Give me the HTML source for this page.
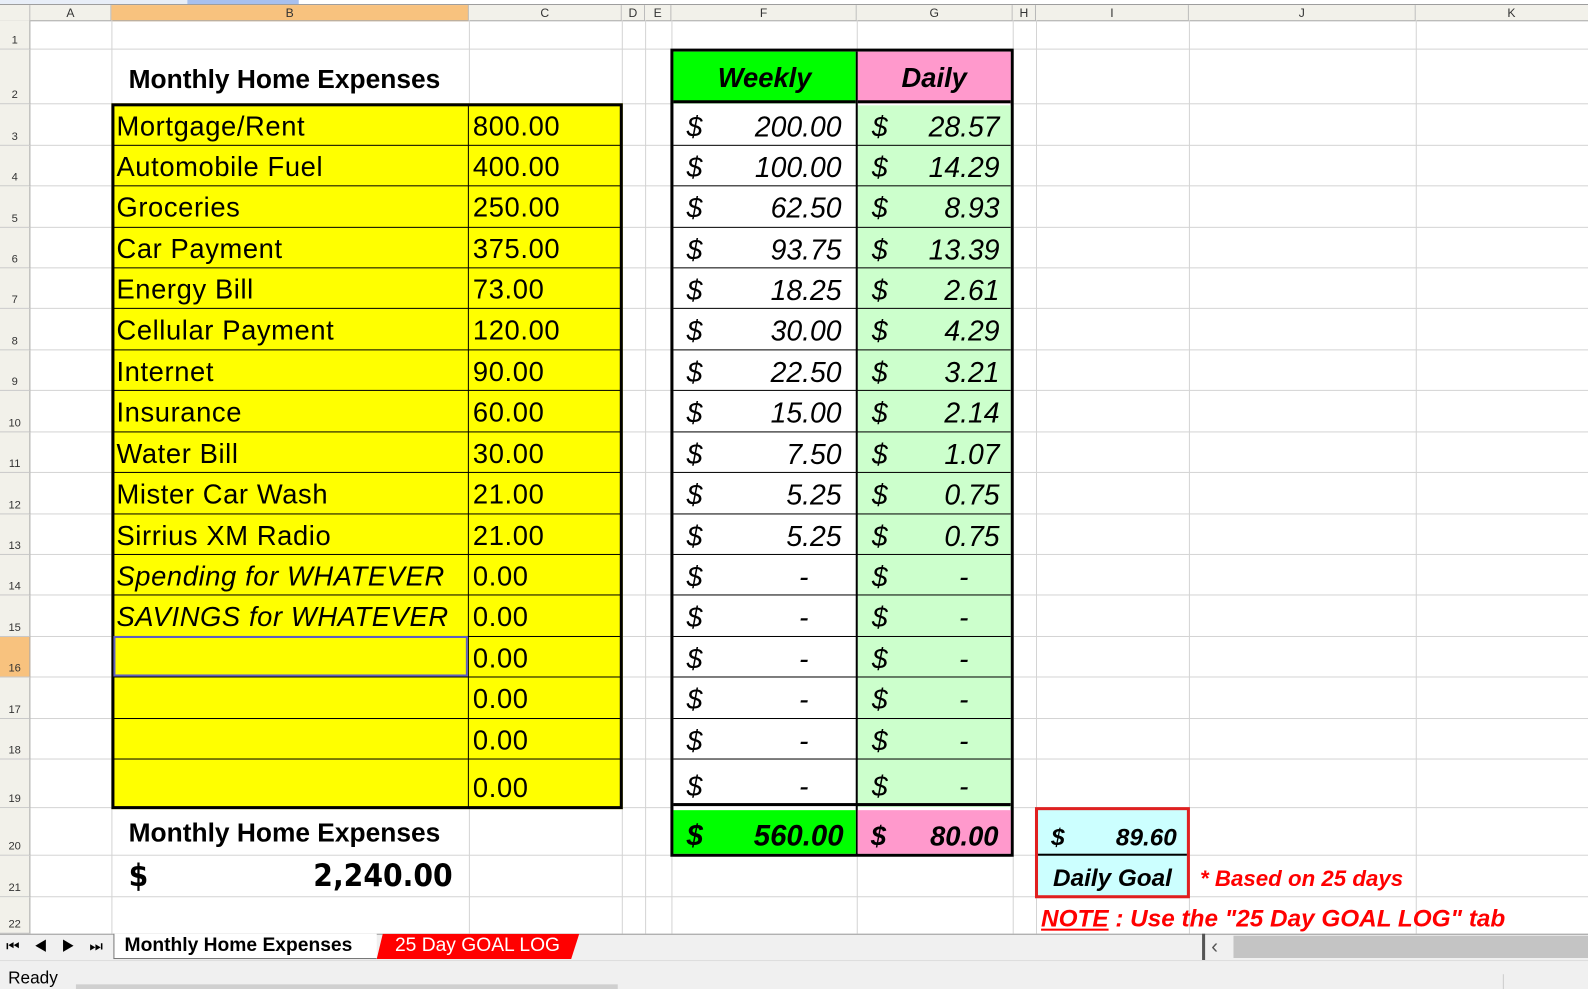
<!DOCTYPE html>
<html><head><meta charset="utf-8"><style>
*{margin:0;padding:0;box-sizing:border-box}
html,body{width:1588px;height:989px;overflow:hidden;background:#fff}
body{font-family:"Liberation Sans",sans-serif;position:relative}
#w{position:absolute;left:0;top:0;width:1570px;height:977px;transform:scale(1.0127);transform-origin:0 0}
.a{position:absolute}
.vl{position:absolute;top:20px;height:902px;width:1px;background:#d4d4d4}
.hl{position:absolute;left:0;width:1588px;height:1px;background:#d4d4d4}
.ch{position:absolute;top:5px;height:16px;font-size:12px;color:#333;text-align:center;line-height:16px;border-right:1px solid #b8b8b8;background:#f2f1ea;border-bottom:1px solid #aaa}
.rh{position:absolute;left:0;width:30px;font-size:11px;color:#333;background:#f2f1ea;border-bottom:1px solid #c8c8c8;border-right:1px solid #aaa;display:flex;align-items:flex-end;justify-content:center;padding-bottom:2px}
.yb>div{position:relative;border-bottom:1px solid #000;font-size:27px;line-height:42px;letter-spacing:0.6px}
.fg{position:absolute;left:665px;top:104px;width:333px;font-size:28px;font-style:italic}
.fg>div{position:relative;border-bottom:1px solid #000;line-height:44px}
.fg .s1{position:absolute;left:13px}
.fg .v1{position:absolute;left:60px;width:106px;text-align:right}
.fg .s2{position:absolute;left:196px}
.fg .v2{position:absolute;left:220px;width:102px;text-align:right}
.fg .d1{position:absolute;left:124px}
.fg .d2{position:absolute;left:282px}
</style></head><body><div id="w">
<div class="a" style="left:0;top:0;width:185px;height:4px;background:#e8eef8"></div>
<div class="a" style="left:185px;top:0;width:110px;height:4px;background:#a8c0ee"></div>
<div class="a" style="left:0;top:4px;width:1588px;height:1px;background:#999"></div>
<div class="ch" style="left:0;width:30px"></div>
<div class="ch" style="left:30px;width:80px">A</div>
<div class="ch" style="left:110px;width:353px;background:#f8c27e">B</div>
<div class="ch" style="left:463px;width:151px">C</div>
<div class="ch" style="left:614px;width:23px">D</div>
<div class="ch" style="left:637px;width:26px">E</div>
<div class="ch" style="left:663px;width:183px">F</div>
<div class="ch" style="left:846px;width:154px">G</div>
<div class="ch" style="left:1000px;width:23px">H</div>
<div class="ch" style="left:1023px;width:151px">I</div>
<div class="ch" style="left:1174px;width:224px">J</div>
<div class="ch" style="left:1398px;width:190px">K</div>
<div class="vl" style="left:110px"></div><div class="vl" style="left:463px"></div><div class="vl" style="left:614px"></div><div class="vl" style="left:637px"></div><div class="vl" style="left:663px"></div><div class="vl" style="left:846px"></div><div class="vl" style="left:1000px"></div><div class="vl" style="left:1023px"></div><div class="vl" style="left:1174px"></div><div class="vl" style="left:1398px"></div>
<div class="hl" style="top:48px"></div><div class="hl" style="top:102px"></div><div class="hl" style="top:143px"></div><div class="hl" style="top:183px"></div><div class="hl" style="top:224px"></div><div class="hl" style="top:264px"></div><div class="hl" style="top:304px"></div><div class="hl" style="top:345px"></div><div class="hl" style="top:385px"></div><div class="hl" style="top:426px"></div><div class="hl" style="top:466px"></div><div class="hl" style="top:507px"></div><div class="hl" style="top:547px"></div><div class="hl" style="top:587px"></div><div class="hl" style="top:628px"></div><div class="hl" style="top:668px"></div><div class="hl" style="top:709px"></div><div class="hl" style="top:749px"></div><div class="hl" style="top:797px"></div><div class="hl" style="top:844px"></div><div class="hl" style="top:885px"></div>
<div class="rh" style="top:20px;height:29px">1</div><div class="rh" style="top:49px;height:54px">2</div><div class="rh" style="top:103px;height:41px">3</div><div class="rh" style="top:144px;height:40px">4</div><div class="rh" style="top:184px;height:41px">5</div><div class="rh" style="top:225px;height:40px">6</div><div class="rh" style="top:265px;height:40px">7</div><div class="rh" style="top:305px;height:41px">8</div><div class="rh" style="top:346px;height:40px">9</div><div class="rh" style="top:386px;height:41px">10</div><div class="rh" style="top:427px;height:40px">11</div><div class="rh" style="top:467px;height:41px">12</div><div class="rh" style="top:508px;height:40px">13</div><div class="rh" style="top:548px;height:40px">14</div><div class="rh" style="top:588px;height:41px">15</div><div class="rh" style="top:629px;height:40px;background:#f8c27e">16</div><div class="rh" style="top:669px;height:41px">17</div><div class="rh" style="top:710px;height:40px">18</div><div class="rh" style="top:750px;height:48px">19</div><div class="rh" style="top:798px;height:47px">20</div><div class="rh" style="top:845px;height:41px">21</div><div class="rh" style="top:886px;height:36px">22</div>
<div class="a" style="left:127px;top:58px;font-size:26px;font-weight:bold;line-height:40px">Monthly Home Expenses</div>
<div class="a" style="left:110px;top:102px;width:505px;height:697px;background:#ff0;border:3px solid #000"></div>
<div class="a" style="left:462px;top:103px;width:1px;height:695px;background:#000"></div>
<div class="yb" style="position:absolute;left:112px;top:104px;width:501px">
<div style="height:40px"><span class="a" style="left:3px">Mortgage/Rent</span><span class="a" style="left:355px">800.00</span></div>
<div style="height:40px"><span class="a" style="left:3px">Automobile Fuel</span><span class="a" style="left:355px">400.00</span></div>
<div style="height:41px"><span class="a" style="left:3px">Groceries</span><span class="a" style="left:355px">250.00</span></div>
<div style="height:40px"><span class="a" style="left:3px">Car Payment</span><span class="a" style="left:355px">375.00</span></div>
<div style="height:40px"><span class="a" style="left:3px">Energy Bill</span><span class="a" style="left:355px">73.00</span></div>
<div style="height:41px"><span class="a" style="left:3px">Cellular Payment</span><span class="a" style="left:355px">120.00</span></div>
<div style="height:40px"><span class="a" style="left:3px">Internet</span><span class="a" style="left:355px">90.00</span></div>
<div style="height:41px"><span class="a" style="left:3px">Insurance</span><span class="a" style="left:355px">60.00</span></div>
<div style="height:40px"><span class="a" style="left:3px">Water Bill</span><span class="a" style="left:355px">30.00</span></div>
<div style="height:41px"><span class="a" style="left:3px">Mister Car Wash</span><span class="a" style="left:355px">21.00</span></div>
<div style="height:40px"><span class="a" style="left:3px">Sirrius XM Radio</span><span class="a" style="left:355px">21.00</span></div>
<div style="height:40px"><span class="a" style="left:3px;font-style:italic">Spending for WHATEVER</span><span class="a" style="left:355px">0.00</span></div>
<div style="height:41px"><span class="a" style="left:3px;font-style:italic">SAVINGS for WHATEVER</span><span class="a" style="left:355px">0.00</span></div>
<div style="height:40px"><span class="a" style="left:0;top:-1px;width:350px;height:40px;border:2px solid #6060c0"></span><span class="a" style="left:355px">0.00</span></div>
<div style="height:41px"><span class="a" style="left:355px">0.00</span></div>
<div style="height:40px"><span class="a" style="left:355px">0.00</span></div>
<div style="height:45px;border-bottom:none;line-height:56px"><span class="a" style="left:355px">0.00</span></div>
</div>
<div class="a" style="left:662px;top:48px;width:339px;height:798px;background:#fff;border:3px solid #000"></div>
<div class="a" style="left:665px;top:51px;width:180px;height:51px;background:#00ff00;border-bottom:3px solid #000;font:italic bold 27px 'Liberation Sans',sans-serif;text-align:center;line-height:52px">Weekly</div>
<div class="a" style="left:847px;top:51px;width:151px;height:51px;background:#ff99cc;border-bottom:3px solid #000;font:italic bold 27px 'Liberation Sans',sans-serif;text-align:center;line-height:52px">Daily</div>
<div class="a" style="left:847px;top:104px;width:151px;height:693px;background:#ccffcc"></div>
<div class="a" style="left:845px;top:51px;width:2px;height:793px;background:#000"></div>
<div class="fg">
<div style="height:40px"><span class="s1">$</span><span class="v1">200.00</span><span class="s2">$</span><span class="v2">28.57</span></div>
<div style="height:40px"><span class="s1">$</span><span class="v1">100.00</span><span class="s2">$</span><span class="v2">14.29</span></div>
<div style="height:41px"><span class="s1">$</span><span class="v1">62.50</span><span class="s2">$</span><span class="v2">8.93</span></div>
<div style="height:40px"><span class="s1">$</span><span class="v1">93.75</span><span class="s2">$</span><span class="v2">13.39</span></div>
<div style="height:40px"><span class="s1">$</span><span class="v1">18.25</span><span class="s2">$</span><span class="v2">2.61</span></div>
<div style="height:41px"><span class="s1">$</span><span class="v1">30.00</span><span class="s2">$</span><span class="v2">4.29</span></div>
<div style="height:40px"><span class="s1">$</span><span class="v1">22.50</span><span class="s2">$</span><span class="v2">3.21</span></div>
<div style="height:41px"><span class="s1">$</span><span class="v1">15.00</span><span class="s2">$</span><span class="v2">2.14</span></div>
<div style="height:40px"><span class="s1">$</span><span class="v1">7.50</span><span class="s2">$</span><span class="v2">1.07</span></div>
<div style="height:41px"><span class="s1">$</span><span class="v1">5.25</span><span class="s2">$</span><span class="v2">0.75</span></div>
<div style="height:40px"><span class="s1">$</span><span class="v1">5.25</span><span class="s2">$</span><span class="v2">0.75</span></div>
<div style="height:40px"><span class="s1">$</span><span class="d1">-</span><span class="s2">$</span><span class="d2">-</span></div>
<div style="height:41px"><span class="s1">$</span><span class="d1">-</span><span class="s2">$</span><span class="d2">-</span></div>
<div style="height:40px"><span class="s1">$</span><span class="d1">-</span><span class="s2">$</span><span class="d2">-</span></div>
<div style="height:41px"><span class="s1">$</span><span class="d1">-</span><span class="s2">$</span><span class="d2">-</span></div>
<div style="height:40px"><span class="s1">$</span><span class="d1">-</span><span class="s2">$</span><span class="d2">-</span></div>
<div style="height:46px;border-bottom:3px solid #000;line-height:54px"><span class="s1">$</span><span class="d1">-</span><span class="s2">$</span><span class="d2">-</span></div>
</div>
<div class="a" style="left:665px;top:800px;width:180px;height:43px;background:#00ff00;font:italic bold 29px 'Liberation Sans',sans-serif;line-height:52px"><span class="a" style="left:13px">$</span><span class="a" style="right:12px">560.00</span></div>
<div class="a" style="left:847px;top:800px;width:151px;height:43px;background:#ff99cc;font:italic bold 27px 'Liberation Sans',sans-serif;line-height:52px"><span class="a" style="left:13px">$</span><span class="a" style="right:12px">80.00</span></div>
<div class="a" style="left:127px;top:802px;font-size:26px;font-weight:bold;line-height:40px">Monthly Home Expenses</div>
<div class="a" style="left:127px;top:845px;width:320px;font-size:31px;font-weight:bold;line-height:40px;font-family:'DejaVu Sans Condensed','Liberation Sans',sans-serif"><span>$</span><span class="a" style="right:0">2,240.00</span></div>
<div class="a" style="left:1022px;top:797px;width:153px;height:90px;background:#ccffff;border:3px solid #e02020"></div>
<div class="a" style="left:1025px;top:843px;width:147px;height:2px;background:#000"></div>
<div class="a" style="left:1038px;top:808px;width:124px;font:italic bold 24px 'Liberation Sans',sans-serif;line-height:40px"><span>$</span><span class="a" style="right:0">89.60</span></div>
<div class="a" style="left:1025px;top:848px;width:147px;text-align:center;font:italic bold 24px 'Liberation Sans',sans-serif;line-height:40px">Daily Goal</div>
<div class="a" style="left:1185px;top:850px;color:#f00;font:italic bold 22px 'Liberation Sans',sans-serif;line-height:36px">* Based on 25 days</div>
<div class="a" style="left:1028px;top:892px;color:#f00;font:italic bold 24px 'Liberation Sans',sans-serif;line-height:32px;white-space:nowrap"><u>NOTE</u> : Use the "25 Day GOAL LOG" tab</div>
<div class="a" style="left:0;top:922px;width:1588px;height:26px;background:#f0f0f0;border-top:1px solid #999"></div>
<div class="a" style="left:6px;top:925px;font-size:15px;letter-spacing:14px;line-height:20px">⏮◀▶⏭</div>
<div class="a" style="left:112px;top:922px;width:260px;height:25px;background:#fff;border-left:1px solid #777;border-bottom:1px solid #777;font-size:19px;font-weight:bold;line-height:24px;padding-left:10px">Monthly Home Expenses</div>
<div class="a" style="left:372px;top:922px;width:200px;height:25px;background:#f00;color:#fff;font-size:19px;line-height:24px;padding-left:18px;clip-path:polygon(6px 0,100% 0,calc(100% - 8px) 100%,0 100%)">25 Day GOAL LOG</div>
<div class="a" style="left:1187px;top:922px;width:3px;height:26px;background:#555"></div>
<div class="a" style="left:1196px;top:922px;font-size:20px;color:#555;line-height:26px">‹</div>
<div class="a" style="left:1218px;top:924px;width:370px;height:22px;background:#c4c4c4"></div>
<div class="a" style="left:0;top:948px;width:1588px;height:41px;background:#f0f0f0;border-top:1px solid #ddd"></div>
<div class="a" style="left:8px;top:955px;font-size:17px;line-height:22px">Ready</div>
<div class="a" style="left:75px;top:972px;width:535px;height:5px;background:#d0d0d0"></div>
<div class="a" style="left:1484px;top:962px;width:1px;height:27px;background:#ccc"></div>
</div></body></html>
